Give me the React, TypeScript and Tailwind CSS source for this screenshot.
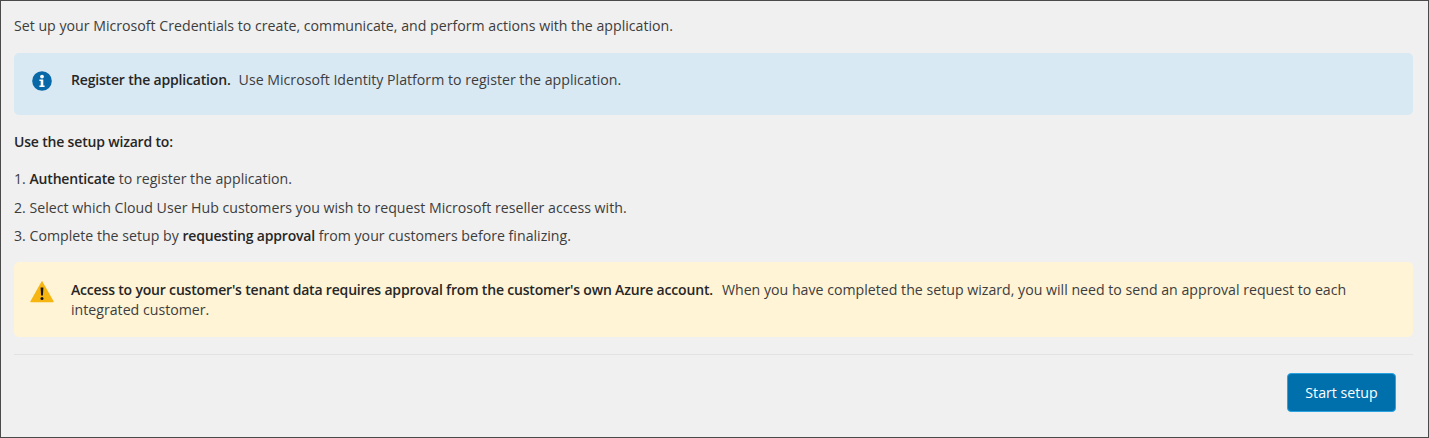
export default function App() {
  const strong = "font-semibold text-[14px] tracking-[-0.18px] text-[#262626]";
  return (
    <div className="h-[438px] w-[1429px] border border-[#4a4a4a] bg-[#f0f0f0] font-['Open_Sans','Noto_Sans',sans-serif] text-[14.17px] leading-[20px] text-[#3d3d3d] overflow-hidden">
      <div className="pl-[13px] pr-[15px]">
        <p className="pt-[15px] h-[52px]">Set up your Microsoft Credentials to create, communicate, and perform actions with the application.</p>
        <div className="flex h-[62px] rounded-[5px] bg-[#d9e9f4] pl-[18px] pr-4 pt-[17px]">
          <svg viewBox="0 0 20 20" className="h-5 w-5 shrink-0 mt-[1px]">
            <circle cx="10" cy="10" r="9.8" fill="#0868a8" />
            <circle cx="10" cy="5.6" r="1.9" fill="#fff" />
            <path d="M7.4 8.4h3.9v6h1.3v1.7H7.4v-1.7h1.3V10H7.4z" fill="#fff" />
          </svg>
          <p className="ml-[19px]"><span className={strong}>Register the application.</span><span className="ml-2">Use Microsoft Identity Platform to register the application.</span></p>
        </div>
        <p className={"mt-[17px] " + strong}>Use the setup wizard to:</p>
        <ol className="mt-[17px] flex flex-col gap-[8.5px]">
          <li>1. <span className={strong}>Authenticate</span> to register the application.</li>
          <li>2. Select which Cloud User Hub customers you wish to request Microsoft reseller access with.</li>
          <li>3. Complete the setup by <span className={strong}>requesting approval</span> from your customers before finalizing.</li>
        </ol>
        <div className="mt-[16px] flex h-[75px] rounded-[5px] bg-[#fff4d6] pl-[16px] pr-10 pt-[18px]">
          <svg viewBox="0 0 24 23" className="h-[23px] w-[24px] shrink-0">
            <path d="M12 .8 23.6 21.2a.7.7 0 0 1-.6 1H1a.7.7 0 0 1-.6-1z" fill="#f7b512" />
            <path d="M10.6 7.5h2.8l-.5 8h-1.8z" fill="#141414" />
            <circle cx="12" cy="18.4" r="1.5" fill="#141414" />
          </svg>
          <p className="ml-[17px]"><span className={strong}>Access to your customer's tenant data requires approval from the customer's own Azure account.</span><span className="ml-[9px]">When you have completed the setup wizard, you will need to send an approval request to each integrated customer.</span></p>
        </div>
        <div className="mt-[17px] border-t border-[#e2e2e2] flex justify-end pt-[18px] pr-[17px]">
          <button className="h-[39px] w-[109px] rounded-[4px] bg-[#0070ad] text-white border border-[#2aa3e0]">Start setup</button>
        </div>
      </div>
    </div>
  );
}
